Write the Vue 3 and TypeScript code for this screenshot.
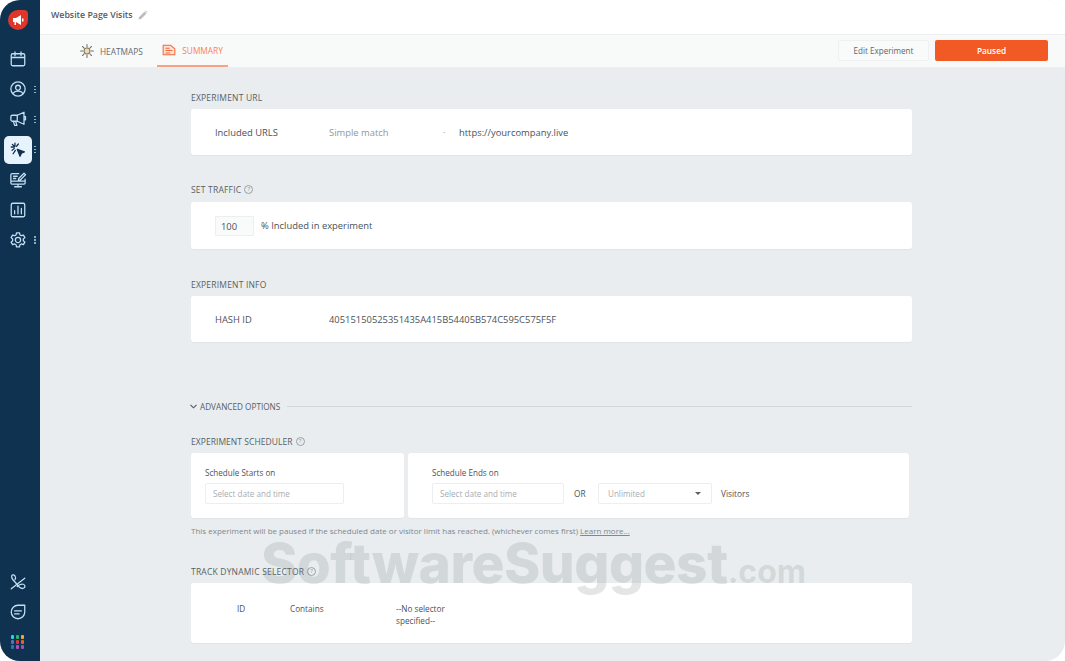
<template>
  <div class="frame">
    <aside class="sidebar">
      <div class="logo">
        <svg width="20" height="20" viewBox="0 0 20 20">
          <path d="M10 0H16a4 4 0 0 1 4 4V10A10 10 0 1 1 10 0Z" fill="#e0352b" />
          <path d="M5 8h3l5-3v10l-5-3v3H6.500v-3H5Z" fill="#fff" />
          <path d="M14 8.500h1.500v3H14Z" fill="#fff" />
        </svg>
      </div>
      <nav class="nav">
        <div v-for="item in navItems" :key="item.name" class="nav-row">
          <span class="nav-icon" :class="{ active: item.active }">
            <svg width="18" height="18" viewBox="0 0 24 24" fill="none" stroke-width="1.700" stroke-linecap="round" stroke-linejoin="round">
              <path :d="item.d" />
              <path v-if="item.active" d="M11 11l9.500 3.500-4 1.800-1.800 4Z" fill="#12314e" />
            </svg>
          </span>
          <span v-if="item.more" class="more"><i></i><i></i><i></i></span>
        </div>
      </nav>
      <div class="nav bottom">
        <div v-for="item in bottomItems" :key="item.name" class="nav-row">
          <span class="nav-icon">
            <svg width="18" height="18" viewBox="0 0 24 24" fill="none" stroke-width="1.700" stroke-linecap="round" stroke-linejoin="round">
              <path :d="item.d" />
            </svg>
          </span>
        </div>
        <div class="nav-row">
          <span class="apps">
            <i v-for="c in appColors" :key="c" :style="{ background: c }"></i>
          </span>
        </div>
      </div>
    </aside>

    <div class="main">
      <header class="topbar">
        <span class="title">Website Page Visits</span>
        <svg class="pencil" width="10" height="10" viewBox="0 0 10 10">
          <path d="M0.500 9.500l0.600-2.500 5.500-5.500 1.900 1.900-5.500 5.500ZM7.200 0.900l0.700-0.500 1.700 1.700-0.500 0.700Z" fill="#bdbdbd" />
        </svg>
      </header>

      <div class="tabbar">
        <div class="tab">
          <svg width="14" height="14" viewBox="0 0 24 24" fill="none" stroke="#6d6d6d" stroke-width="1.800" stroke-linecap="round">
            <circle cx="12" cy="12" r="5" fill="#e8dcc0" stroke="#8a7a55" />
            <path d="M12 1v4M12 19v4M1 12h4M19 12h4M4.200 4.200l2.900 2.900M16.900 16.900l2.900 2.900M4.200 19.800l2.900-2.900M16.900 7.100l2.900-2.900" />
          </svg>
          <span>HEATMAPS</span>
        </div>
        <div class="tab current">
          <svg width="14" height="12" viewBox="0 0 24 20" stroke="#f26a3c" stroke-width="1.800" stroke-linejoin="round">
            <path d="M2 2h13l7 6v10H2Z" fill="#fde0d3" />
            <path d="M6 7h7M6 11h12M6 15h8" fill="none" />
          </svg>
          <span>SUMMARY</span>
        </div>
        <button class="btn-edit">Edit Experiment</button>
        <button class="btn-paused">Paused</button>
      </div>

      <div class="content">
        <div class="column">
          <h3 class="label first">EXPERIMENT URL</h3>
          <section class="card url-card">
            <span class="c-name">Included URLS</span>
            <span class="c-match">Simple match</span>
            <span class="c-dot">·</span>
            <span class="c-url">https://yourcompany.live</span>
          </section>

          <h3 class="label traffic-label">SET TRAFFIC <span class="help">?</span></h3>
          <section class="card traffic-card">
            <span class="num-input">100</span>
            <span>% Included in experiment</span>
          </section>

          <h3 class="label info-label">EXPERIMENT INFO</h3>
          <section class="card url-card">
            <span class="c-name">HASH ID</span>
            <span>40515150525351435A415B54405B574C595C575F5F</span>
          </section>

          <div class="advanced">
            <svg width="7" height="5" viewBox="0 0 7 5" fill="none" stroke="#4f5963" stroke-width="1.100">
              <path d="M0.500 0.800l3 3 3-3" />
            </svg>
            <span>ADVANCED OPTIONS</span>
            <i class="rule"></i>
          </div>

          <h3 class="label sched-label">EXPERIMENT SCHEDULER <span class="help">?</span></h3>
          <div class="sched">
            <section class="card start">
              <div class="f-label">Schedule Starts on</div>
              <div class="field start-field">Select date and time</div>
            </section>
            <section class="card end">
              <div class="f-label">Schedule Ends on</div>
              <div class="end-row">
                <div class="field end-field">Select date and time</div>
                <span class="or">OR</span>
                <div class="field select">
                  Unlimited
                  <i class="caret"></i>
                </div>
                <span class="visitors">Visitors</span>
              </div>
            </section>
          </div>
          <p class="note">This experiment will be paused if the scheduled date or visitor limit has reached. (whichever comes first) <a>Learn more...</a></p>

          <h3 class="label track-label">TRACK DYNAMIC SELECTOR <span class="help">?</span></h3>
          <section class="card track">
            <span class="t-id">ID</span>
            <span class="t-op">Contains</span>
            <span class="t-val">--No selector specified--</span>
          </section>
        </div>
      </div>
    </div>

    <div class="watermark">SoftwareSuggest<small>.com</small></div>
  </div>
</template>

<script setup lang="ts">
const navItems = [
  { name: 'calendar', d: 'M5 5h14a2 2 0 0 1 2 2v12a2 2 0 0 1-2 2H5a2 2 0 0 1-2-2V7a2 2 0 0 1 2-2ZM3 10h18M8 2.500v5M16 2.500v5' },
  { name: 'contacts', more: true, d: 'M12 2.500a9.500 9.500 0 1 0 0 19 9.500 9.500 0 0 0 0-19ZM12 7a3.200 3.200 0 1 0 0 6.400A3.200 3.200 0 0 0 12 7ZM5.500 18.500c1-2.800 3.500-3.600 6.500-3.600s5.500 0.800 6.500 3.600' },
  { name: 'campaigns', more: true, d: 'M2.500 9a2 2 0 0 1 2-2H11l9-4v16l-9-4H4.500a2 2 0 0 1-2-2ZM11 7v8M6 15.500l1.500 5h3l-1.500-5M20 9h2v4h-2' },
  { name: 'heatmaps', more: true, active: true, d: 'M8 3v4M3 8h4M4.500 4.500l2.500 2.500M12.500 4l-2.500 3M4 12.500l3-2.500M5.500 17l3-4.500' },
  { name: 'screens', d: 'M13 3.500H4a1.500 1.500 0 0 0-1.500 1.500v11A1.500 1.500 0 0 0 4 17.500h16a1.500 1.500 0 0 0 1.500-1.500v-5M2.500 13.500h19M12 17.500v3M7.500 21h9M6 7h5M6 10h3M13 10l7-7 2 2-7 7-2.500 0.500Z' },
  { name: 'reports', d: 'M5 3h14a2 2 0 0 1 2 2v14a2 2 0 0 1-2 2H5a2 2 0 0 1-2-2V5a2 2 0 0 1 2-2ZM7.500 17v-4M12 17V7M16.500 17v-7' },
  { name: 'settings', more: true, d: 'M10 2.500h4l0.600 2.800 1.900 1 2.700-0.900 2 3.400-2.100 1.900v2.200l2.100 1.900-2 3.400-2.700-0.900-1.900 1-0.600 2.800h-4l-0.600-2.800-1.900-1-2.700 0.900-2-3.400 2.100-1.900v-2.200L2.800 8.800l2-3.400 2.700 0.900 1.900-1ZM12 8.500a3.500 3.500 0 1 0 0 7 3.500 3.500 0 0 0 0-7Z' }
]

const bottomItems = [
  { name: 'tools', d: 'M3 21L21 7M4 3c-1 2 0 5 3 8s5 6 7 8c2 1.500 5 2 6.500 0.500s0.500-4-1.500-4.500c-3-0.800-6 1-8 3M4 3c1.500-0.800 3-0.500 4 1s1 3.500 0 5' },
  { name: 'chat', d: 'M21 3H12a9 9 0 1 0 0 18c5 0 9-4 9-9ZM7.500 10.500h9M7.500 14.500h6' }
]

const appColors = ['#29d3e0', '#27b765', '#f0a63a', '#5a6fc4', '#d8383a', '#e0662f', '#2a76b5', '#b34dc2', '#a34fb8']
</script>

<style>
html, body {
  background: #fff;
  margin: 0;
}
</style>

<style scoped>
.frame {
  position: relative;
  display: flex;
  width: 1065px;
  height: 661px;
  overflow: hidden;
  border-radius: 20px;
  font-family: "Open Sans", "Liberation Sans", sans-serif;
  font-size: 9.400px;
  color: #4c5257;
  background: #e9edf0;
}

.sidebar {
  flex: none;
  display: flex;
  flex-direction: column;
  width: 40px;
  background: #0f3250;
}
.logo {
  height: 40px;
  padding: 10px 0 0 8px;
  box-sizing: border-box;
}
.logo svg {
  display: block;
}
.nav {
  margin-top: 4px;
}
.nav.bottom {
  margin-top: auto;
  padding-bottom: 4px;
}
.nav-row {
  display: flex;
  align-items: center;
  height: 30.200px;
  padding-left: 4px;
}
.nav.bottom .nav-row {
  height: 30px;
}
.nav-icon {
  display: flex;
  align-items: center;
  justify-content: center;
  width: 28px;
  height: 28px;
  border-radius: 5px;
  stroke: #c4dff3;
}
.nav-icon.active {
  background: #e6f3fc;
  stroke: #12314e;
}
.more {
  display: flex;
  flex-direction: column;
  gap: 1.500px;
  margin-left: 2px;
}
.more i {
  width: 1.500px;
  height: 1.500px;
  background: #a9c4d8;
  border-radius: 50%;
}
.apps {
  display: grid;
  grid-template-columns: repeat(3, 3.500px);
  grid-auto-rows: 3.500px;
  gap: 1.500px;
  margin-left: 6.500px;
}
.apps i {
  border-radius: 1px;
}

.main {
  flex: 1;
  display: flex;
  flex-direction: column;
  min-width: 0;
}
.topbar {
  display: flex;
  align-items: center;
  gap: 5px;
  height: 35px;
  padding: 0 0 5px 11px;
  box-sizing: border-box;
  background: #fff;
  border-bottom: 1px solid #eceeef;
}
.title {
  font-size: 8.800px;
  font-weight: 600;
  color: #555b60;
}
.pencil {
  display: block;
}

.tabbar {
  display: flex;
  align-items: center;
  height: 33px;
  padding-left: 40px;
  box-sizing: border-box;
  background: #f8f9f9;
  border-bottom: 1px solid #eceeef;
}
.tab {
  display: flex;
  align-items: center;
  gap: 6px;
  height: 100%;
  font-size: 8.300px;
  color: #666b70;
}
.tab.current {
  gap: 6px;
  margin-left: 14.500px;
  padding: 0 5px;
  color: #f7835c;
  border-bottom: 2px solid #f8a283;
  box-sizing: border-box;
}
.btn-edit {
  margin: 0 0 2px auto;
  width: 91px;
  height: 21px;
  padding: 0;
  border: 1px solid #eef0f1;
  border-radius: 2px;
  background: #f9fafa;
  font: inherit;
  font-size: 8.100px;
  color: #62676c;
}
.btn-paused {
  width: 113px;
  height: 21px;
  margin: 0 17px 2px 6px;
  padding: 0;
  border: 0;
  border-radius: 2px;
  background: #f15a24;
  font: inherit;
  font-size: 8.300px;
  font-weight: 600;
  color: #fff;
}

.content {
  flex: 1;
  padding-left: 151px;
}
.column {
  width: 721px;
}
.label {
  display: flex;
  align-items: center;
  gap: 3px;
  height: 12px;
  margin: 0;
  font-size: 8.500px;
  font-weight: 400;
  letter-spacing: 0.200px;
  color: #585e63;
}
.label.first {
  margin-top: 23px;
  margin-bottom: 6px;
}
.traffic-label {
  margin-top: 28px;
  margin-bottom: 7px;
}
.info-label {
  margin-top: 29px;
  margin-bottom: 6px;
}
.sched-label {
  margin-top: 23px;
  margin-bottom: 6px;
  letter-spacing: 0.050px;
}
.track-label {
  margin-top: 28px;
  margin-bottom: 6px;
}
.help {
  display: inline-flex;
  align-items: center;
  justify-content: center;
  width: 7px;
  height: 7px;
  border: 1px solid #9aa1a6;
  border-radius: 50%;
  font-size: 6px;
  color: #8b9297;
}
.card {
  background: #fff;
  border-radius: 3px;
  box-shadow: 0 1px 0 #e2e5e8;
}
.url-card {
  display: flex;
  align-items: center;
  height: 46px;
  padding-left: 24px;
}
.c-name {
  width: 114px;
}
.c-match {
  width: 114px;
  color: #92979b;
}
.c-dot {
  width: 16px;
  color: #92979b;
}
.traffic-card {
  display: flex;
  align-items: center;
  gap: 7px;
  height: 47px;
  padding-left: 24px;
}
.num-input {
  width: 39px;
  height: 20px;
  line-height: 20px;
  padding-left: 5px;
  box-sizing: border-box;
  background: #f9fafa;
  border: 1px solid #eceeef;
  border-radius: 1px;
}
.advanced {
  display: flex;
  align-items: center;
  gap: 3px;
  height: 12px;
  margin: 58px 0 0 -1px;
  font-size: 8.200px;
  color: #585e63;
}
.rule {
  flex: 1;
  margin-left: 4px;
  border-top: 1px solid #d3d7da;
}
.sched {
  display: flex;
  gap: 4px;
  width: 718px;
}
.sched .card {
  height: 65px;
  box-sizing: border-box;
}
.start {
  width: 213px;
  padding: 14px 0 0 14px;
}
.end {
  flex: 1;
  padding: 14px 0 0 24px;
}
.f-label {
  height: 11px;
  line-height: 11px;
  font-size: 8.100px;
  margin-bottom: 5px;
}
.field {
  height: 21px;
  line-height: 19px;
  padding-left: 7px;
  box-sizing: border-box;
  border: 1px solid #eceeef;
  border-radius: 2px;
  font-size: 8.100px;
  color: #a8adb1;
}
.start-field {
  width: 139px;
}
.end-row {
  display: flex;
  align-items: center;
}
.end-field {
  width: 132px;
}
.or {
  width: 34px;
  padding-left: 10px;
  box-sizing: border-box;
  font-size: 8.300px;
}
.select {
  position: relative;
  width: 114px;
  padding-left: 9px;
}
.caret {
  position: absolute;
  top: 8px;
  right: 10px;
  border: 3px solid transparent;
  border-top: 3px solid #5a6065;
}
.visitors {
  margin-left: 9px;
  font-size: 8.300px;
}
.note {
  height: 12px;
  line-height: 12px;
  margin: 7px 0 0;
  font-size: 8px;
  color: #81878c;
}
.note a {
  text-decoration: underline;
}
.track {
  display: flex;
  height: 60px;
  padding-top: 20px;
  box-sizing: border-box;
  font-size: 8.200px;
  line-height: 12px;
}
.t-id {
  margin-left: 46px;
  width: 53px;
}
.t-op {
  width: 106px;
}
.t-val {
  width: 64px;
}

/* sits over the page, it is not part of the layout */
.watermark {
  position: absolute;
  left: 261px;
  top: 530px;
  font-family: Inter, "Open Sans", sans-serif;
  font-size: 55px;
  line-height: 66px;
  font-weight: 800;
  letter-spacing: -0.500px;
  white-space: nowrap;
  color: rgba(120, 128, 130, 0.2);
  pointer-events: none;
}
.watermark small {
  font-size: 32px;
  font-weight: 700;
  letter-spacing: 0;
}
</style>
